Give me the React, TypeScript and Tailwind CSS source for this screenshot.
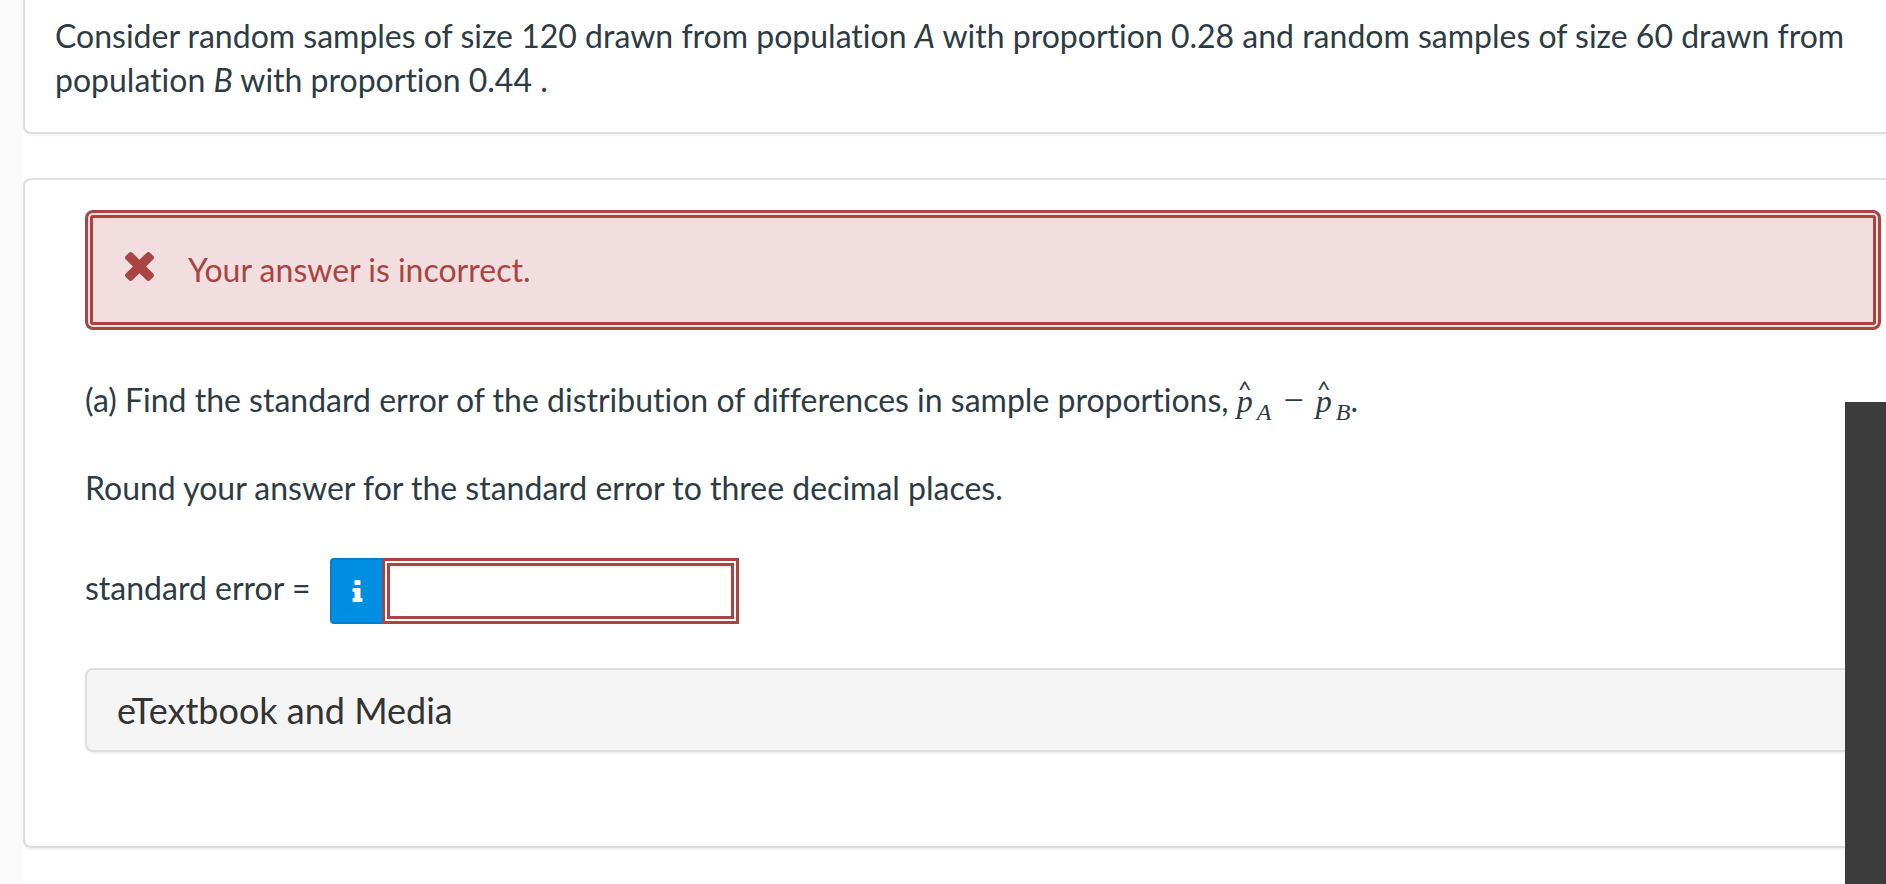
import { useState } from "react";
import type { ReactNode } from "react";

function TimesIcon() {
  return (
    <svg
      viewBox="302 366 1188 1188"
      className="size-[29px] fill-current"
      aria-hidden="true"
    >
      <path d="M1490 1322q0 40-28 68l-136 136q-28 28-68 28t-68-28l-294-294-294 294q-28 28-68 28t-68-28l-136-136q-28-28-28-68t28-68l294-294-294-294q-28-28-28-68t28-68l136-136q28-28 68-28t68 28l294 294 294-294q28-28 68-28t68 28l136 136q28 28 28 68t-28 68l-294 294 294 294q28 28 28 68z" />
    </svg>
  );
}

function InfoIcon() {
  return (
    <svg
      viewBox="576 128 640 1408"
      className="h-[22px] w-[11px] fill-current"
      aria-hidden="true"
    >
      <path d="M1216 1344v128q0 26-19 45t-45 19h-512q-26 0-45-19t-19-45v-128q0-26 19-45t45-19h64v-384h-64q-26 0-45-19t-19-45v-128q0-26 19-45t45-19h384q26 0 45 19t19 45v576h64q26 0 45 19t19 45zm-128-1152v192q0 26-19 45t-45 19h-256q-26 0-45-19t-19-45v-192q0-26 19-45t45-19h256q26 0 45 19t19 45z" />
    </svg>
  );
}

// sample proportion: p with a hat and a subscript
function PHat({ sub }: { sub: string }) {
  return (
    <span className="inline-block font-['Liberation_Serif',serif] leading-none">
      <span className="relative inline-block italic">
        p
        <span className="absolute inset-x-0 -top-2 text-center font-['Lato',sans-serif] text-2xl leading-none not-italic">
          ^
        </span>
      </span>
      <span className="relative top-2 ml-1 text-2xl leading-none italic">
        {sub}
      </span>
    </span>
  );
}

function Card({
  className,
  children,
}: {
  className: string;
  children: ReactNode;
}) {
  return (
    <section
      className={`border-l-2 border-b-2 border-[#dddddd] bg-white shadow-[0_2px_2px_rgba(0,0,0,0.05)] ${className}`}
    >
      {children}
    </section>
  );
}

export default function App() {
  const [answer, setAnswer] = useState("");

  return (
    <div className="flex min-h-screen bg-[#fafafa] font-['Lato',sans-serif] text-[32px] leading-[44px] text-[#2d3b45] [font-variant-ligatures:none]">
      <main className="ml-[23px] flex-1 bg-white">
        <Card className="rounded-bl-lg pt-[14px] pr-10 pb-[30px] pl-[30px]">
          <p>
            Consider random samples of size 120 drawn from population <i>A</i>{" "}
            with proportion 0.28 and random samples of size 60 drawn from
            population <i>B</i> with proportion 0.44 .
          </p>
        </Card>

        <Card className="mt-11 rounded-l-lg border-t-2 pt-[30px] pr-[5px] pb-[94px] pl-[60px]">
          <div
            role="alert"
            className="flex items-start gap-[34px] rounded-lg border-8 border-double border-[#a94442] bg-[#f2dede] px-8 py-[30px] text-[#a94442]"
          >
            <span className="flex h-9 items-center">
              <TimesIcon />
            </span>
            <p>Your answer is incorrect.</p>
          </div>

          <p className="mt-12">
            (a) Find the standard error of the distribution of differences in
            sample proportions, <PHat sub="A" />
            <span className="mx-3 font-['Liberation_Serif',serif] text-4xl leading-none">
              −
            </span>
            <PHat sub="B" />.
          </p>

          <p className="mt-11">
            Round your answer for the standard error to three decimal places.
          </p>

          <div className="mt-12 flex items-start">
            <label htmlFor="standard-error" className="mr-5 pt-2">
              standard error =
            </label>
            <button
              type="button"
              aria-label="Information"
              className="flex h-[66px] w-[52px] items-center justify-center rounded-l border-2 border-r-0 border-[#0080cc] bg-[#008ee2] text-white"
            >
              <InfoIcon />
            </button>
            <input
              id="standard-error"
              type="text"
              value={answer}
              onChange={(e) => setAnswer(e.target.value)}
              className="h-[66px] w-[357px] border-8 border-double border-[#a94442] bg-white px-4 shadow-[inset_0_2px_2px_rgba(0,0,0,0.075)] outline-none"
            />
          </div>

          <button
            type="button"
            className="mt-11 block w-full rounded-lg border-2 border-[#dddddd] bg-[#f5f5f5] px-[30px] py-[18px] text-left text-4xl leading-[44px] text-[#333333] shadow-[0_2px_2px_rgba(0,0,0,0.05)]"
          >
            eTextbook and Media
          </button>
        </Card>
      </main>

      {/* docked panel that covers the right edge */}
      <aside className="fixed top-[402px] right-0 bottom-0 w-[41px] bg-[#3c3c3c]" />
    </div>
  );
}
